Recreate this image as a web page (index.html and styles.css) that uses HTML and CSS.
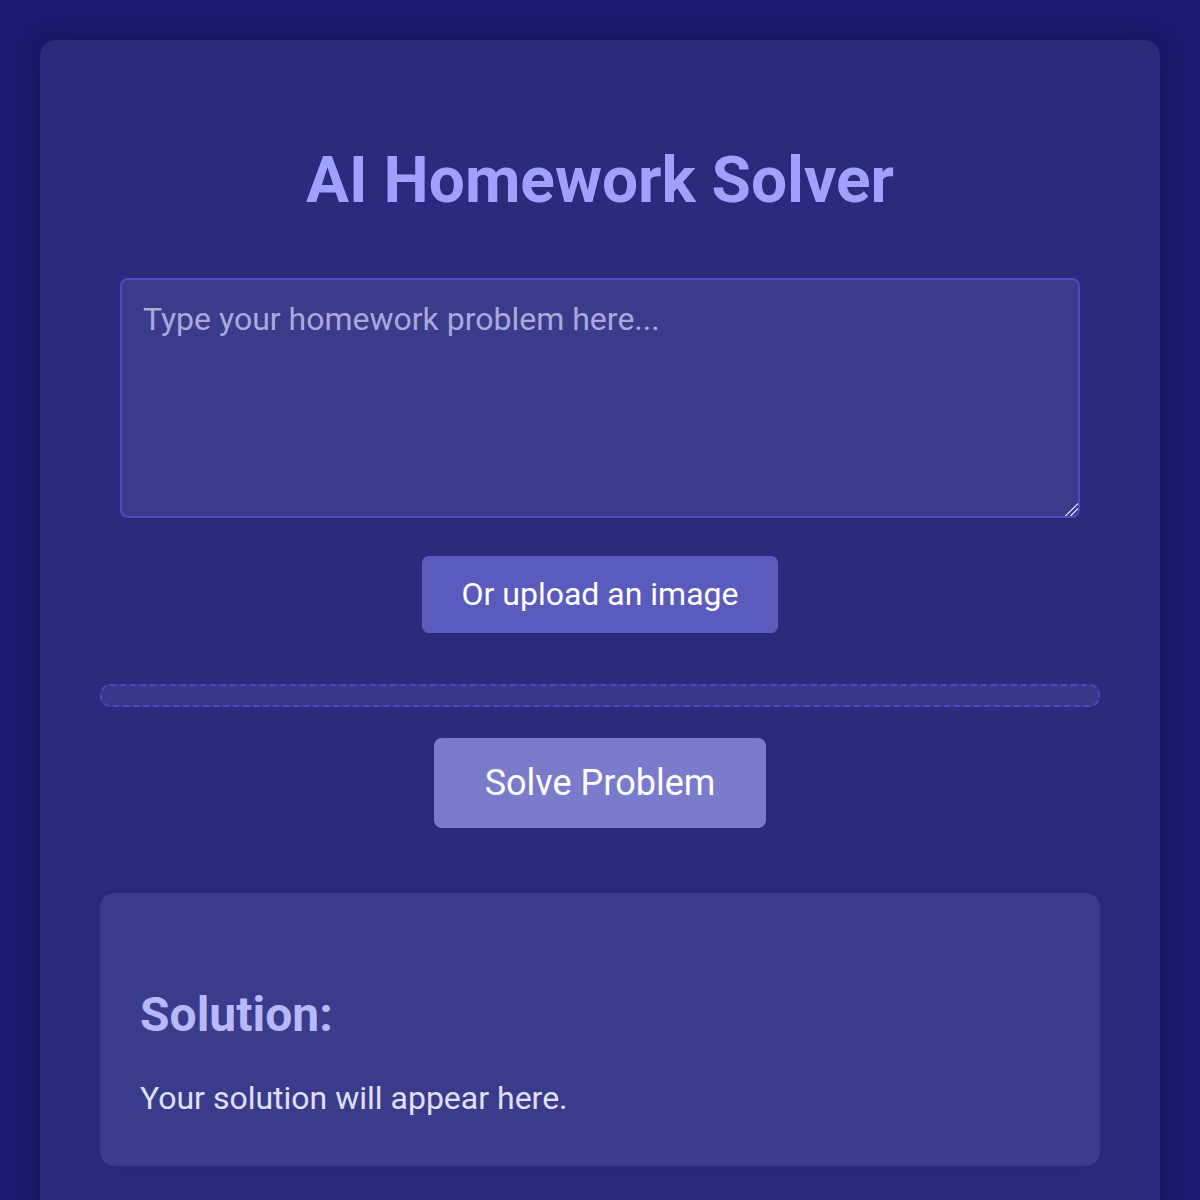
FILE: index.html
```html
<!DOCTYPE html>
<html lang="en">
<head>
<meta charset="utf-8">
<title>AI Homework Solver</title>
<link rel="stylesheet" href="styles.css">
</head>
<body>
<main class="card">
  <h1 class="title">AI Homework Solver</h1>
  <div class="input-row">
    <textarea class="problem" placeholder="Type your homework problem here..."></textarea>
  </div>
  <div class="btn-row upload-row">
    <button class="btn upload">Or upload an image</button>
  </div>
  <div class="dropzone"></div>
  <div class="btn-row solve-row">
    <button class="btn solve">Solve Problem</button>
  </div>
  <section class="solution">
    <h2 class="solution-title">Solution:</h2>
    <p class="solution-text">Your solution will appear here.</p>
  </section>
</main>
</body>
</html>
```

FILE: styles.css
```css
* { box-sizing: border-box; }
html, body { margin: 0; padding: 0; }
body {
  background: #1a1a6e;
  font-family: Roboto, "Noto Sans", sans-serif;
  padding: 40px 40px 0;
  min-height: 1200px;
}
.card {
  background: #2b2b7e;
  border-radius: 16px;
  box-shadow: 0 0 24px rgba(0, 0, 0, 0.25);
  padding: 60px 60px 60px;
  min-height: 1200px;
}
.title {
  margin: 43px 0 60px;
  text-align: center;
  font-size: 64px;
  font-weight: 700;
  line-height: 75px;
  color: #a0a0ff;
}
.input-row {
  display: flex;
  justify-content: center;
}
.problem {
  display: block;
  width: 960px;
  height: 240px;
  background: #3b3b8b;
  border: 2px solid #4b4bc4;
  border-radius: 8px;
  padding: 20px 21px;
  font-family: Roboto, "Noto Sans", sans-serif;
  font-size: 32px;
  color: #e0e0f5;
  resize: vertical;
  outline: none;
}
.problem::placeholder { color: #a9a9dc; }
.problem::-webkit-resizer {
  background: linear-gradient(135deg, transparent 55%, #c8c8e8 55%, #c8c8e8 62%, transparent 62%, transparent 72%, #c8c8e8 72%, #c8c8e8 79%, transparent 79%);
}
.btn-row {
  display: flex;
  justify-content: center;
}
.upload-row { margin-top: 38px; }
.btn {
  border: none;
  color: #ffffff;
  font-family: Roboto, "Noto Sans", sans-serif;
  cursor: pointer;
}
.upload {
  background: #5b5bbd;
  border-radius: 7px;
  font-size: 32px;
  line-height: 37px;
  padding: 20px 39px;
  height: 77px;
}
.dropzone {
  margin-top: 51px;
  height: 23px;
  background: #38388a;
  border: 2px dashed #4a4ac6;
  border-radius: 10px;
}
.solve-row { margin-top: 31px; }
.solve {
  background: #7b7bcc;
  border-radius: 8px;
  font-size: 36px;
  line-height: 42px;
  padding: 24px 51px;
  height: 90px;
}
.solution {
  margin-top: 65px;
  background: #3b3b8b;
  border-radius: 14px;
  box-shadow: 0 0 12px rgba(0, 0, 0, 0.14);
  padding: 40px 40px 40px;
  height: 273px;
}
.solution-title {
  margin: 54px 0 0;
  font-size: 48px;
  line-height: 56px;
  font-weight: 700;
  color: #b8b8ff;
}
.solution-text {
  margin: 37px 0 0;
  font-size: 32px;
  line-height: 37px;
  color: #e0e0f5;
}
```
